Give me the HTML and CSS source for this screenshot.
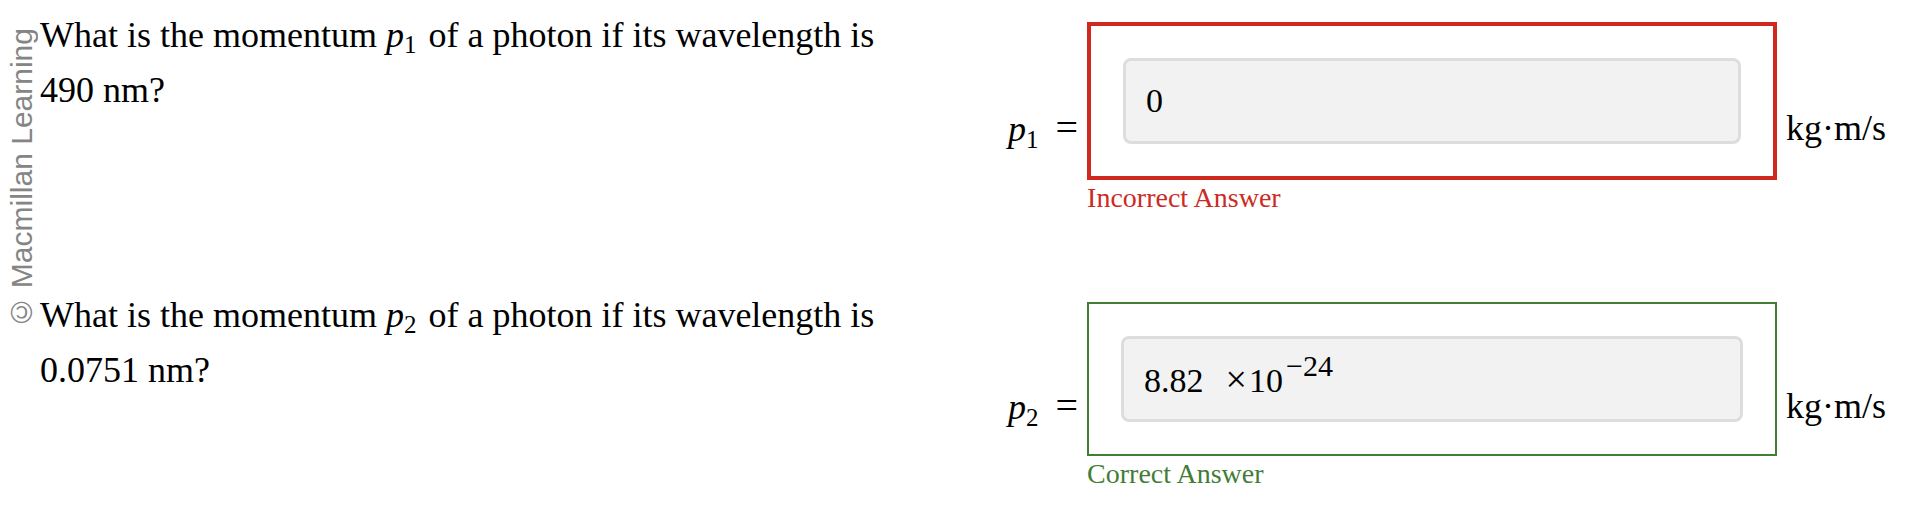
FILE: index.html
```html
<!DOCTYPE html>
<html lang="en">
<head>
	<title>Photon momentum</title>
	<meta charset="UTF-8">
	<link rel="stylesheet" href="styles.css">
</head>
<body>
	<div class="watermark">&copy; Macmillan Learning</div>
	<div class="quiz">
		<div class="row">
			<p class="question">What is the momentum <i>p</i><sub>1</sub> of a photon if its wavelength is 490&nbsp;nm?</p>
			<div class="answer">
				<span class="label"><i>p</i><sub>1</sub><span class="eq">=</span></span>
				<div class="box wrong">
					<div class="input">0</div>
				</div>
				<span class="unit">kg&middot;m/s</span>
				<p class="feedback wrong">Incorrect Answer</p>
			</div>
		</div>
		<div class="row">
			<p class="question">What is the momentum <i>p</i><sub>2</sub> of a photon if its wavelength is 0.0751&nbsp;nm?</p>
			<div class="answer">
				<span class="label"><i>p</i><sub>2</sub><span class="eq">=</span></span>
				<div class="box right">
					<div class="input">8.82<span class="times">&times;</span>10<sup>&minus;24</sup></div>
				</div>
				<span class="unit">kg&middot;m/s</span>
				<p class="feedback right">Correct Answer</p>
			</div>
		</div>
	</div>
</body>
</html>
```

FILE: styles.css
```css
body{
	margin: 8px;
	font-family: "Liberation Serif", "Times New Roman", serif;
	color: #000;
	background-color: #fff;
}
.watermark{
	position: absolute;
	left: 7px;
	top: 28px;
	writing-mode: vertical-rl;
	transform: rotate(180deg);
	font-family: "Liberation Sans", Arial, sans-serif;
	font-size: 30px;
	line-height: 30px;
	color: #858585;
	white-space: nowrap;
}
.quiz{
	display: flex;
	flex-direction: column;
	gap: 72px;
}
.row{
	display: flex;
	align-items: flex-start;
}
.question{
	width: 850px;
	margin: 0 0 0 32px;
	font-size: 36px;
	line-height: 55px;
}
.question sub{
	font-size: 25px;
	line-height: 0;
	vertical-align: -6px;
	margin-right: 3px;
}
.answer{
	display: grid;
	grid-template-columns: auto 690px auto;
	align-items: center;
	margin: 14px 0 0 118px;
}
.label, .unit{
	font-size: 36px;
	line-height: 36px;
	margin-top: 54px;
	white-space: nowrap;
}
.label sub{
	font-size: 25px;
	line-height: 0;
	vertical-align: -7px;
}
.eq{
	font-size: 40px;
	margin: 0 9px 0 17px;
}
.unit{
	margin-left: 9px;
}
.box{
	box-sizing: border-box;
	width: 690px;
	padding: 32px;
}
.box.wrong{
	border: 4px solid #d0281f;
}
.box.right{
	border: 2px solid #437d35;
}
.input{
	box-sizing: border-box;
	height: 86px;
	padding: 0 20px;
	border: 3px solid #dddddd;
	border-radius: 8px;
	background-color: #f2f2f2;
	font-size: 34px;
	line-height: 80px;
	white-space: nowrap;
}
.times{
	font-size: 38px;
	margin: 0 2px 0 22px;
}
.input sup{
	font-size: 30px;
	line-height: 0;
	vertical-align: 16px;
	margin-left: 3px;
}
.feedback{
	grid-column: 2;
	margin: 0;
	font-size: 28px;
	line-height: 36px;
}
.feedback.wrong{
	color: #cc2a22;
}
.feedback.right{
	color: #437d35;
}
```
